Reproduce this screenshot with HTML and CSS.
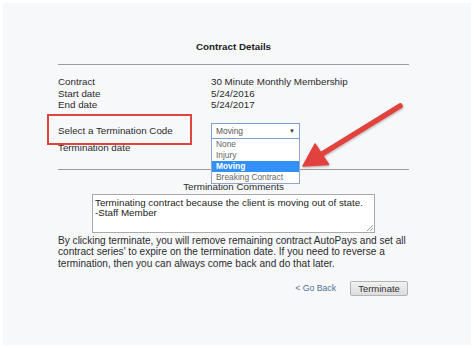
FILE: index.html
```html
<!DOCTYPE html>
<html>
<head>
<meta charset="utf-8">
<link rel="stylesheet" href="styles.css">
</head>
<body>
<div class="panel">
  <div class="content">
    <div class="title">Contract Details</div>
    <div class="rule rule-top"></div>
    <div class="details">
      <div class="row"><span class="label">Contract</span><span class="value">30 Minute Monthly Membership</span></div>
      <div class="row"><span class="label">Start date</span><span class="value">5/24/2016</span></div>
      <div class="row"><span class="label">End date</span><span class="value">5/24/2017</span></div>
    </div>
    <div class="row select-row">
      <span class="label">Select a Termination Code</span>
      <div class="select-wrap">
        <div class="select">Moving<span class="caret">&#9660;</span></div>
        <ul class="options">
          <li>None</li>
          <li>Injury</li>
          <li class="selected">Moving</li>
          <li>Breaking Contract</li>
        </ul>
      </div>
    </div>
    <div class="row date-row"><span class="label">Termination date</span></div>
    <div class="rule rule-bottom"></div>
    <div class="comments-label">Termination Comments</div>
    <div class="textarea">Terminating contract because the client is moving out of state.<br>-Staff Member<span class="grip"></span></div>
    <p class="notice">By clicking terminate, you will remove remaining contract AutoPays and set all contract series' to expire on the termination date. If you need to reverse a termination, then you can always come back and do that later.</p>
    <div class="actions">
      <a class="back">&lt; Go Back</a>
      <button class="btn">Terminate</button>
    </div>
  </div>
  <div class="callout-box"></div>
  <svg class="arrow" width="474" height="348" viewBox="0 0 474 348">
    <defs>
      <filter id="sh" x="-20%" y="-20%" width="140%" height="140%">
        <feDropShadow dx="0.5" dy="1" stdDeviation="1" flood-color="#000" flood-opacity="0.3"/>
      </filter>
    </defs>
    <g filter="url(#sh)" fill="#e2433d" stroke="#e2433d">
      <line x1="400" y1="106" x2="318" y2="156.5" stroke-width="5.5" stroke-linecap="round"/>
      <polygon points="303,166 315,144 328.5,164.5" stroke-width="1.5" stroke-linejoin="round"/>
    </g>
  </svg>
</div>
</body>
</html>
```
FILE: styles.css
```css
html, body {
  margin: 0;
  padding: 0;
  background: #ffffff;
}
body {
  width: 474px;
  height: 348px;
  overflow: hidden;
  font-family: "Liberation Sans", Arial, sans-serif;
  font-size: 9.8px;
  color: #2b2b2b;
}
.panel {
  position: relative;
  margin: 3px;
  height: 342px;
  background: #f7f8fa;
}
.content {
  position: relative;
  padding-top: 38px;
  margin-left: 55px;
  width: 351px;
}
.title {
  text-align: center;
  font-weight: bold;
  font-size: 9.8px;
  line-height: 12px;
  color: #222;
}
.rule {
  height: 1px;
  background: #9c9c9c;
}
.rule-top {
  margin-top: 11px;
}
.details {
  margin-top: 11px;
}
.row {
  display: flex;
  align-items: center;
  line-height: 11.5px;
}
.label {
  width: 153px;
  flex: none;
}
.select-row {
  margin-top: 12.5px;
  height: 16px;
}
.select-wrap {
  position: relative;
}
.select {
  box-sizing: border-box;
  width: 89px;
  height: 16px;
  border: 1px solid #7f9ed6;
  background: #fff;
  font-size: 8.4px;
  line-height: 14px;
  padding-left: 4px;
  color: #555;
  position: relative;
}
.caret {
  position: absolute;
  right: 4px;
  top: 0;
  font-size: 6px;
  color: #333;
}
.options {
  position: absolute;
  left: 0;
  top: 16px;
  width: 89px;
  box-sizing: border-box;
  margin: 0;
  padding: 0;
  list-style: none;
  background: #fff;
  border: 1px solid #8fa6d0;
  border-top: none;
  font-size: 8.4px;
  z-index: 2;
}
.options li {
  height: 11px;
  line-height: 11px;
  padding-left: 4px;
  color: #666;
}
.options li.selected {
  background: #3390f6;
  color: #fff;
  font-weight: bold;
}
.date-row {
  margin-top: 3px;
  line-height: 12px;
}
.rule-bottom {
  margin-top: 15px;
}
.comments-label {
  margin-top: 10.5px;
  text-align: center;
  line-height: 12px;
}
.textarea {
  position: relative;
  box-sizing: border-box;
  margin: 1.5px auto 0;
  width: 283px;
  height: 38.5px;
  border: 1px solid #a9a9a9;
  background: #fff;
  padding: 3px 2px 0;
  line-height: 10px;
  color: #222;
}
.grip {
  position: absolute;
  right: 1px;
  bottom: 1px;
  width: 6px;
  height: 6px;
  background: linear-gradient(135deg, transparent 45%, #999 45%, #999 55%, transparent 55%, transparent 70%, #999 70%, #999 80%, transparent 80%);
}
.notice {
  margin: 2.5px 0 0;
  font-size: 10.1px;
  line-height: 11.3px;
  color: #2b2b2b;
}
.actions {
  margin-top: 12px;
  display: flex;
  justify-content: flex-end;
  align-items: center;
  gap: 14px;
  padding-right: 1px;
}
.back {
  color: #4d7094;
  font-size: 8.7px;
}
.btn {
  box-sizing: border-box;
  width: 58px;
  height: 15px;
  padding: 0;
  border: 1px solid #b3b3b3;
  border-radius: 2px;
  background: linear-gradient(#f2f2f2, #dcdcdc);
  font-family: "Liberation Sans", Arial, sans-serif;
  font-size: 9.5px;
  color: #333;
  line-height: 13px;
}
.callout-box {
  position: absolute;
  left: 44px;
  top: 111px;
  width: 145px;
  height: 31px;
  box-sizing: border-box;
  border: 2px solid #e0443f;
}
.arrow {
  position: absolute;
  left: -3px;
  top: -3px;
  pointer-events: none;
}
```
